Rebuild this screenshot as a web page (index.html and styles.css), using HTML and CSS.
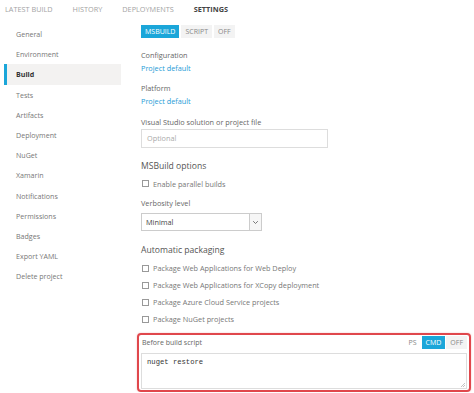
FILE: index.html
```html
<!DOCTYPE html>
<html>
<head>
<meta charset="utf-8">
<link rel="stylesheet" href="styles.css">
</head>
<body>
<div class="tabs">
  <span class="tab">LATEST BUILD</span>
  <span class="tab">HISTORY</span>
  <span class="tab">DEPLOYMENTS</span>
  <span class="tab active">SETTINGS</span>
</div>
<div class="main">
  <nav class="sidenav">
    <div class="nav-item">General</div>
    <div class="nav-item">Environment</div>
    <div class="nav-item active">Build</div>
    <div class="nav-item">Tests</div>
    <div class="nav-item">Artifacts</div>
    <div class="nav-item">Deployment</div>
    <div class="nav-item">NuGet</div>
    <div class="nav-item">Xamarin</div>
    <div class="nav-item">Notifications</div>
    <div class="nav-item">Permissions</div>
    <div class="nav-item">Badges</div>
    <div class="nav-item">Export YAML</div>
    <div class="nav-item">Delete project</div>
  </nav>
  <section class="content">
    <div class="toggle">
      <span class="tbtn on">MSBUILD</span>
      <span class="tbtn">SCRIPT</span>
      <span class="tbtn">OFF</span>
    </div>
    <div class="field first">
      <div class="label">Configuration</div>
      <div class="link">Project default</div>
    </div>
    <div class="field">
      <div class="label">Platform</div>
      <div class="link">Project default</div>
    </div>
    <div class="label vs-label">Visual Studio solution or project file</div>
    <div class="input">Optional</div>
    <h3 class="heading h-msbuild">MSBuild options</h3>
    <div class="check single"><span class="box"></span>Enable parallel builds</div>
    <div class="label verb-label">Verbosity level</div>
    <div class="select"><span class="sel-text">Minimal</span><span class="sel-arrow"><svg width="7" height="5" viewBox="0 0 7 5"><path d="M1.2 1.2 L3.5 3.5 L5.8 1.2" fill="none" stroke="#666" stroke-width="0.9"/></svg></span></div>
    <h3 class="heading h-pack">Automatic packaging</h3>
    <div class="checks">
      <div class="check"><span class="box"></span>Package Web Applications for Web Deploy</div>
      <div class="check"><span class="box"></span>Package Web Applications for XCopy deployment</div>
      <div class="check"><span class="box"></span>Package Azure Cloud Service projects</div>
      <div class="check"><span class="box"></span>Package NuGet projects</div>
    </div>
    <div class="script-box">
      <div class="script-head">
        <span class="label">Before build script</span>
        <div class="toggle small">
          <span class="tbtn plain">PS</span>
          <span class="tbtn on">CMD</span>
          <span class="tbtn">OFF</span>
        </div>
      </div>
      <div class="code">nuget restore<span class="grip"><svg width="5" height="5" viewBox="0 0 5 5"><path d="M5 1 L1 5 M5 3 L3 5" stroke="#aaa" stroke-width="0.7"/></svg></span></div>
    </div>
  </section>
</div>
</body>
</html>
```

FILE: styles.css
```css
* { box-sizing: border-box; }
body {
  margin: 0;
  background: #fff;
  font-family: "Open Sans", "Noto Sans", sans-serif;
  font-size: 7.3px;
  color: #666;
}
.tabs {
  display: flex;
  gap: 20px;
  height: 18px;
  align-items: center;
  padding-left: 5px;
}
.tab {
  font-size: 7.3px;
  color: #a3a3a3;
}
.tab.active {
  color: #444;
  font-weight: 700;
}
.main {
  display: flex;
  gap: 20px;
}
.sidenav {
  width: 121px;
  flex: none;
  padding-top: 6px;
  padding-left: 4px;
}
.nav-item {
  height: 20.2px;
  line-height: 20.2px;
  padding-left: 12px;
  font-size: 7.1px;
  color: #777;
}
.nav-item.active {
  background: #f3f2f1;
  border-left: 3px solid #1ba6d9;
  padding-left: 9px;
  font-weight: 700;
  color: #333;
}
.content {
  width: 326px;
  flex: none;
  padding-top: 7px;
}
.toggle {
  display: flex;
  gap: 2px;
}
.tbtn {
  height: 13px;
  line-height: 13px;
  padding: 0 4px;
  font-size: 7px;
  background: #f3f3f3;
  color: #888;
}
.tbtn.on {
  background: #1ba6d9;
  color: #fff;
}
.tbtn.plain { background: #fff; }
.field { margin-top: 7px; }
.field.first { margin-top: 10.5px; }
.label, .link {
  line-height: 13px;
}
.label { color: #666; }
.link { color: #1e9bd6; }
.vs-label { margin-top: 8px; }
.input {
  margin-top: 0.5px;
  width: 187px;
  height: 19px;
  border: 1px solid #ddd;
  line-height: 17px;
  padding-left: 5px;
  color: #aaa;
}
.heading {
  margin: 0;
  font-weight: 400;
  font-size: 8.6px;
  line-height: 14px;
  color: #555;
}
.h-msbuild { margin-top: 11px; }
.h-pack { margin-top: 12px; }
.check {
  display: flex;
  align-items: center;
  height: 17px;
  color: #777;
}
.check.single { margin-top: 4px; height: 13px; }
.box {
  width: 7px;
  height: 7px;
  border: 1px solid #999;
  margin-left: 1px;
  margin-right: 4px;
  background: #fff;
}
.verb-label { margin-top: 7px; }
.select {
  margin-top: 3px;
  width: 121px;
  height: 18px;
  border: 1px solid #ccc;
  display: flex;
  align-items: stretch;
}
.sel-text {
  flex: 1;
  line-height: 16px;
  padding-left: 4px;
  color: #444;
}
.sel-arrow {
  width: 12px;
  border-left: 1px solid #ccc;
  background: #f6f6f6;
  display: flex;
  align-items: center;
  justify-content: center;
}
.checks { margin-top: 2.5px; }
.script-box {
  margin: 5.5px -4px 0 -4px;
  border: 2px solid #e0474c;
  border-radius: 4px;
  padding: 0 2px 1px 2px;
  box-shadow: 0 0 2px rgba(224, 71, 76, 0.35);
}
.script-head {
  display: flex;
  justify-content: space-between;
  align-items: center;
  height: 14px;
}
.script-head .label {
  padding-left: 1px;
  font-size: 7px;
}
.toggle.small { gap: 1px; }
.code {
  position: relative;
  margin-top: 4px;
  height: 36px;
  border: 1px solid #ddd;
  padding: 2px 5px;
  font-family: "Liberation Mono", "DejaVu Sans Mono", monospace;
  font-size: 7.2px;
  line-height: 12px;
  color: #333;
}
.grip {
  position: absolute;
  right: 1px;
  bottom: 1px;
  display: flex;
}
```
